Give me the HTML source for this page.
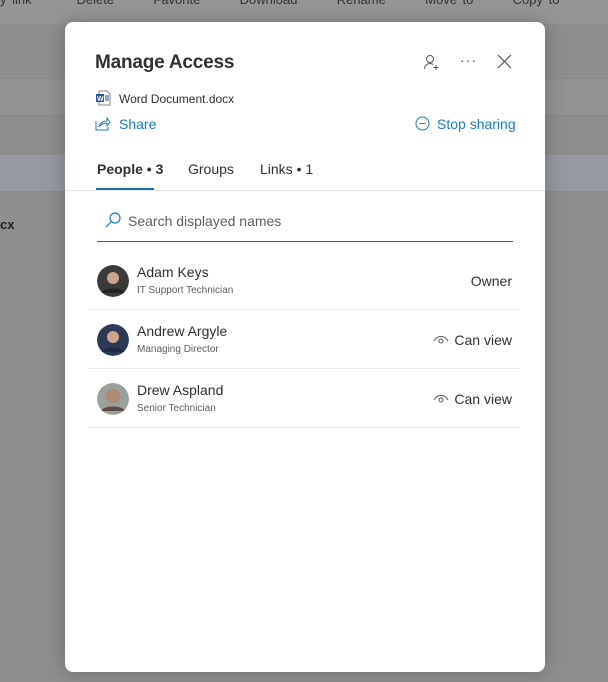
<!DOCTYPE html>
<html><head><meta charset="utf-8"><style>
*{margin:0;padding:0;box-sizing:border-box}
body{width:608px;height:682px;overflow:hidden;background:#8e8e8e;font-family:"Liberation Sans",sans-serif;position:relative}
.bg{position:absolute;left:0;width:608px}
.dlg{position:absolute;left:65px;top:22px;width:480px;height:650px;background:#fff;border-radius:8px;box-shadow:0 0 20px rgba(0,0,0,.25)}
.abs{position:absolute}
.title{left:30px;top:30px;font-size:19px;color:#323130;font-weight:bold;letter-spacing:-.2px}
.blue{color:#1a7cc4;font-size:14px}
.tab{top:139px;font-size:14px;color:#323130}
.row{position:absolute;left:23px;width:432px;height:59px;border-bottom:1px solid #edebe9}
.av{position:absolute;left:9px;top:14px;width:32px;height:32px;border-radius:50%}
.nm{position:absolute;left:49px;top:13px;font-size:14px;color:#323130}
.rl{position:absolute;left:49px;top:34px;font-size:10px;color:#605e5c}
.pm{position:absolute;right:8px;top:22px;font-size:14px;color:#323130}
</style></head><body>
<div class="bg" style="top:0;height:24px;background:#969696"></div>
<div class="bg" style="top:78px;height:38px;background:#939393;border-top:1px solid #888;border-bottom:1px solid #888"></div>
<div class="bg" style="top:155px;height:37px;background:#969aa0;border-bottom:1px solid #8a8a8a"></div>
<div class="abs" style="left:0;top:217px;font-size:13px;color:#222;font-weight:bold">cx</div>
<div class="abs" style="left:0;top:-8px;font-size:13px;color:#333;white-space:nowrap;word-spacing:2px">y link &nbsp;&nbsp;&nbsp;&nbsp;&nbsp;&nbsp; Delete &nbsp;&nbsp;&nbsp;&nbsp;&nbsp; Favorite &nbsp;&nbsp;&nbsp;&nbsp;&nbsp; Download &nbsp;&nbsp;&nbsp;&nbsp;&nbsp; Rename &nbsp;&nbsp;&nbsp;&nbsp;&nbsp; Move to &nbsp;&nbsp;&nbsp;&nbsp;&nbsp; Copy to</div>
<div class="dlg">
<div class="abs title">Manage Access</div>
<svg class="abs" style="left:358px;top:32px" width="18" height="18" viewBox="0 0 18 18" fill="none" stroke="#555" stroke-width="1"><circle cx="7" cy="5" r="3.5"/><path d="M1.5 15c0-3.5 2.5-5.5 5.5-5.5 1.5 0 2.5.4 3.3 1"/><path d="M13 11v5M10.5 13.5h5"/></svg>
<div class="abs" style="left:395px;top:30px;font-size:14px;color:#555;letter-spacing:1px">···</div>
<svg class="abs" style="left:432px;top:32px" width="15" height="15" viewBox="0 0 15 15" stroke="#555" stroke-width="1.2"><path d="M1 1L14 14M14 1L1 14"/></svg>
<svg class="abs" style="left:30px;top:68px" width="16" height="16" viewBox="0 0 16 16"><path d="M4 1h8l3 3v11H4z" fill="#fff" stroke="#888"/><rect x="1" y="4" width="8" height="8" fill="#2b579a"/><text x="2" y="11" font-size="7" fill="#fff" font-family="Liberation Sans" font-weight="bold">W</text><path d="M10 6h4M10 8h4M10 10h4" stroke="#2b579a"/></svg>
<div class="abs" style="left:54px;top:70px;font-size:12px;color:#323130">Word Document.docx</div>
<svg class="abs" style="left:30px;top:94px" width="16" height="16" viewBox="0 0 16 16" fill="none" stroke="#1a7cc4" stroke-width="1"><path d="M1 5v9h12v-3"/><path d="M4 11c1-4 4-6 8-6V2l3 4-3 4V7c-3 0-6 1-8 4z"/></svg>
<div class="abs blue" style="left:54px;top:94px">Share</div>
<svg class="abs" style="left:350px;top:94px" width="15" height="15" viewBox="0 0 15 15" fill="none" stroke="#1a7cc4"><circle cx="7.5" cy="7.5" r="6.5"/><path d="M4.5 7.5h6"/></svg>
<div class="abs blue" style="left:372px;top:94px">Stop sharing</div>
<div class="abs tab" style="left:32px;font-weight:bold">People • 3</div>
<div class="abs" style="left:31px;top:166px;width:58px;height:3px;background:#1a6fb3"></div>
<div class="abs tab" style="left:123px">Groups</div>
<div class="abs tab" style="left:195px">Links • 1</div>
<div class="abs" style="left:0;top:168px;width:480px;height:1px;background:#e6e6e6"></div>
<svg class="abs" style="left:39px;top:189px" width="18" height="18" viewBox="0 0 18 18" fill="none" stroke="#1a7cc4" stroke-width="1.2"><circle cx="11" cy="7" r="5"/><path d="M7.5 10.5L2 16"/></svg>
<div class="abs" style="left:63px;top:191px;font-size:14px;color:#605e5c">Search displayed names</div>
<div class="abs" style="left:32px;top:219px;width:416px;height:1px;background:#555"></div>
<div class="row" style="top:229px"><svg class="av" viewBox="0 0 32 32"><circle cx="16" cy="16" r="16" fill="#3a3a3a"/><circle cx="16" cy="13" r="6" fill="#c9a58e"/><path d="M4 28c3-6 21-6 24 0" fill="#222"/></svg><div class="nm">Adam Keys</div><div class="rl">IT Support Technician</div><div class="pm">Owner</div></div>
<div class="row" style="top:288px"><svg class="av" viewBox="0 0 32 32"><circle cx="16" cy="16" r="16" fill="#2d3a55"/><circle cx="16" cy="13" r="6" fill="#d1a58a"/><path d="M4 28c3-6 21-6 24 0" fill="#1d2a44"/></svg><div class="nm">Andrew Argyle</div><div class="rl">Managing Director</div><div class="pm"><svg width="16" height="10" viewBox="0 0 16 10" fill="none" stroke="#555" style="margin-right:5px"><path d="M1 6c3-6 11-6 14 0"/><circle cx="8" cy="6" r="2"/></svg>Can view</div></div>
<div class="row" style="top:347px"><svg class="av" viewBox="0 0 32 32"><circle cx="16" cy="16" r="16" fill="#9aa09a"/><circle cx="16" cy="13" r="7" fill="#b08a72"/><path d="M4 28c3-6 21-6 24 0" fill="#5a4c44"/></svg><div class="nm">Drew Aspland</div><div class="rl">Senior Technician</div><div class="pm"><svg width="16" height="10" viewBox="0 0 16 10" fill="none" stroke="#555" style="margin-right:5px"><path d="M1 6c3-6 11-6 14 0"/><circle cx="8" cy="6" r="2"/></svg>Can view</div></div>
</div>
</body></html>
